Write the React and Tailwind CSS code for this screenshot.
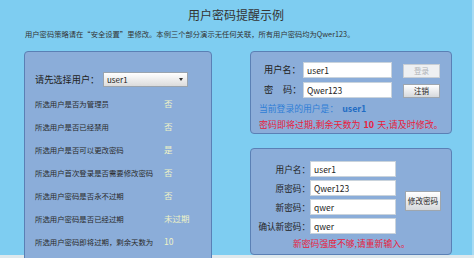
import React from 'react';

const font = { fontFamily: '"Noto Sans CJK SC", "Noto Sans", sans-serif' };

const rows = [
  ['所选用户是否为管理员', '否'],
  ['所选用户是否已经禁用', '否'],
  ['所选用户是否可以更改密码', '是'],
  ['所选用户首次登录是否需要修改密码', '否'],
  ['所选用户密码是否永不过期', '否'],
  ['所选用户密码是否已经过期', '未过期'],
  ['所选用户密码即将过期，剩余天数为', '10'],
];

const Input = ({ value, w = 'w-[89px]' }) => (
  <div className={`${w} h-[16px] bg-white border border-[#c9d3dc] flex items-center pl-[3px] text-[8.5px] text-[#222]`}>
    {value}
  </div>
);

const App = () => {
  return (
    <div className="w-[474px] h-[258px] overflow-hidden bg-[#7ecdf1] text-[#222]" style={font}>
      <div className="flex h-[255px]">
        <div className="w-[472px] flex flex-col">
          {/* header */}
          <div className="h-[26px] pt-[7px] text-center text-[12px] leading-[16px] text-[#333]">用户密码提醒示例</div>
          <div className="h-[25px] pl-[25px] pt-[2px] text-[7.3px] leading-[12px] text-[#333] whitespace-nowrap">
            用户密码策略请在“安全设置”里修改。本例三个部分演示无任何关联，所有用户密码均为Qwer123。
          </div>

          <div className="flex flex-1 min-h-0">
            {/* left panel */}
            <div className="ml-[24px] w-[188px] h-[220px] bg-[#8badd9] border border-[#5a80b5] rounded-[4px] pt-[20px] pl-[10px]">
              <div className="flex items-center h-[15px]">
                <span className="w-[68px] text-[9.2px] whitespace-nowrap">请先选择用户：</span>
                <div className="w-[85px] h-[15px] bg-gradient-to-b from-white to-[#dcdcdc] border border-[#9aa4ae] flex items-center justify-between pl-[3px] pr-[4px] text-[8px] text-[#222]">
                  <span>user1</span>
                  <svg width="4" height="3" viewBox="0 0 4 3"><path d="M0 0h4L2 3z" fill="#333" /></svg>
                </div>
              </div>
              <div className="mt-[5px]">
                {rows.map(([label, value]) => (
                  <div key={label} className="h-[23px] flex items-center">
                    <span className="w-[129px] text-[7.4px] whitespace-nowrap text-[#2a2a2a]">{label}</span>
                    <span className="text-[8.5px] text-[#eef2c6]">{value}</span>
                  </div>
                ))}
              </div>
            </div>

            {/* right column */}
            <div className="ml-[38px] w-[202px] flex flex-col">
              <div className="h-[89px] bg-[#8badd9] border border-[#5a80b5] rounded-[4px] pt-[10px] pl-[8px]">
                <div className="ml-[5px] flex flex-col gap-[4px]">
                  <div className="flex items-end">
                    <span className="w-[39px] h-[16px] flex items-center text-[9.2px] whitespace-nowrap">用户名：</span>
                    <Input value="user1" />
                    <div className="ml-[11px] w-[37px] h-[14px] bg-[#eef0f2] border border-[#c8ced4] flex items-center justify-center text-[7.5px] text-[#b0b4b8]">登录</div>
                  </div>
                  <div className="flex items-end">
                    <span className="w-[39px] h-[16px] flex items-center text-[9.2px] whitespace-nowrap">
                      <span className="w-[19px]">密</span>码：
                    </span>
                    <Input value="Qwer123" />
                    <div className="ml-[11px] w-[37px] h-[14px] bg-gradient-to-b from-white to-[#d6d9dc] border border-[#9ea6ae] flex items-center justify-center text-[7.5px] text-[#222]">注销</div>
                  </div>
                </div>
                <div className="mt-[3px] h-[16px] flex items-center text-[8.8px] text-[#2f7ed6] whitespace-nowrap">
                  当前登录的用户是：<span className="ml-[4px] font-bold text-[#1f6cc4]">user1</span>
                </div>
                <div className="h-[16px] flex items-center text-[9px] text-[#e8213c] whitespace-nowrap">
                  密码即将过期,剩余天数为<span className="mx-[3px] font-bold">10</span>天,请及时修改。
                </div>
              </div>

              <div className="mt-[14px] h-[120px] bg-[#8badd9] border border-[#5a80b5] rounded-[4px] pt-[12px]">
                <div className="flex items-center">
                  <div className="flex flex-col gap-[3px]">
                    {[
                      ['用户名：', 'user1'],
                      ['原密码：', 'Qwer123'],
                      ['新密码：', 'qwer'],
                      ['确认新密码：', 'qwer'],
                    ].map(([l, v]) => (
                      <div key={l} className="flex items-center">
                        <span className="w-[59px] text-right text-[8.6px] whitespace-nowrap">{l}</span>
                        <Input value={v} w="w-[86px]" />
                      </div>
                    ))}
                  </div>
                  <div className="ml-[9px] mt-[6px] w-[36px] h-[20px] bg-gradient-to-b from-white to-[#d6d9dc] border border-[#9ea6ae] flex items-center justify-center text-[7.6px] text-[#222] whitespace-nowrap">
                    修改密码
                  </div>
                </div>
                <div className="mt-[2px] h-[16px] pl-[42px] flex items-center text-[8.8px] text-[#e8213c] whitespace-nowrap">
                  新密码强度不够,请重新输入。
                </div>
              </div>
            </div>
          </div>
        </div>
        <div className="w-[2px] bg-[#a6dbf3]" />
      </div>
      <div className="h-[3px] bg-[#dfe8ec]" />
    </div>
  );
};

export default App;
